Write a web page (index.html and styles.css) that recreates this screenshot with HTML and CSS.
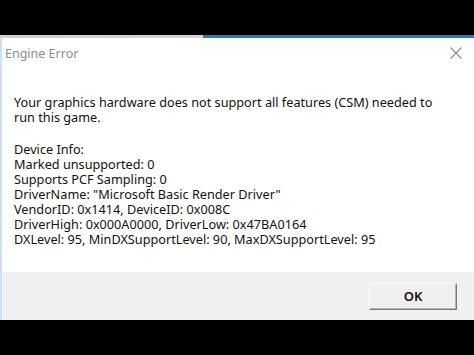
FILE: index.html
```html
<!DOCTYPE html>
<html>
<head>
<meta charset="utf-8">
<link rel="stylesheet" href="styles.css">
</head>
<body>
<div class="screen">
  <div class="dialog">
    <div class="edge"></div>
    <div class="window">
      <div class="titlebar">
        <span class="title">Engine Error</span>
        <svg class="close" width="12" height="12" viewBox="0 0 12 12"><path d="M0.5 0.5 L11.5 11.5 M11.5 0.5 L0.5 11.5" stroke="#8a8a8a" stroke-width="1.1" fill="none"/></svg>
      </div>
      <div class="content">
        <div class="msg">
          <div class="line">Your graphics hardware does not support all features (CSM) needed to</div>
          <div class="line">run this game.</div>
        </div>
        <div class="msg">
          <div class="line">Device Info:</div>
          <div class="line">Marked unsupported: 0</div>
          <div class="line">Supports PCF Sampling: 0</div>
          <div class="line">DriverName: "Microsoft Basic Render Driver"</div>
          <div class="line">VendorID: 0x1414, DeviceID: 0x008C</div>
          <div class="line">DriverHigh: 0x000A0000, DriverLow: 0x47BA0164</div>
          <div class="line">DXLevel: 95, MinDXSupportLevel: 90, MaxDXSupportLevel: 95</div>
        </div>
      </div>
      <div class="footer">
        <button class="ok">OK</button>
      </div>
    </div>
  </div>
</div>
</body>
</html>
```
FILE: styles.css
```css
html, body {
  margin: 0;
  padding: 0;
  background: #000;
}
.screen {
  width: 474px;
  height: 355px;
  padding-top: 35px;
  box-sizing: border-box;
  background: #000;
}
.dialog {
  display: flex;
  border-top: 3px solid transparent;
  border-image: linear-gradient(to right, #cfcfcf 0, #d8d4cc 203px, #1c7fd0 203px, #1c7fd0 100%) 1;
}
.edge {
  width: 2px;
  background: #cfe0f2;
}
.window {
  flex: 1;
  height: 282px;
  display: flex;
  flex-direction: column;
  background: #fff;
  font-family: "Noto Sans", "Open Sans", sans-serif;
}
.titlebar {
  height: 30px;
  flex: none;
  display: flex;
  align-items: center;
  justify-content: space-between;
  padding: 0 12px 0 3px;
}
.title {
  font-size: 12.5px;
  color: #8c8c8c;
}
.close {
  display: block;
}
.content {
  flex: 1;
  padding: 27px 0 0 12px;
}
.msg {
  margin: 0 0 17px 0;
  font-size: 12.7px;
  color: #111;
}
.line {
  height: 15px;
  line-height: 15px;
  white-space: nowrap;
}
.footer {
  height: 48px;
  flex: none;
  background: #f0f0f0;
  display: flex;
  justify-content: flex-end;
  align-items: center;
  padding-right: 17px;
}
.ok {
  width: 88px;
  height: 27px;
  background: #efefef;
  border: 1px solid;
  border-color: #fdfdfd #7a7a7a #7a7a7a #fdfdfd;
  box-shadow: inset -1px -1px 0 #b5b5b5;
  font-family: "Noto Sans", "Open Sans", sans-serif;
  font-size: 13px;
  font-weight: 600;
  color: #111;
  padding: 0;
}
```
